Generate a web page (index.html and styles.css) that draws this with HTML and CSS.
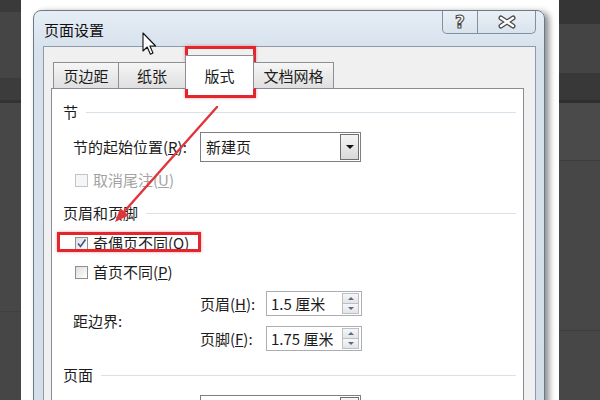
FILE: index.html
```html
<!DOCTYPE html>
<html lang="zh-CN">
<head>
<meta charset="utf-8">
<title>页面设置</title>
<link rel="stylesheet" href="styles.css">
</head>
<body>
<div class="stage">
  <div class="bg-left"></div>
  <div class="desk">
    <div class="dialog">
      <div class="titlebar">
        <span class="title">页面设置</span>
        <div class="caption">
          <div class="cbtn help">?</div>
          <div class="cbtn close">
            <svg width="20" height="14" viewBox="0 0 20 14">
              <path d="M4 3 L16 11 M16 3 L4 11" stroke="#4a4a4a" stroke-width="5" stroke-linecap="round" fill="none"/>
              <path d="M4 3 L16 11 M16 3 L4 11" stroke="#ffffff" stroke-width="2.4" stroke-linecap="round" fill="none"/>
            </svg>
          </div>
        </div>
      </div>
      <div class="client">
        <div class="tabs">
          <div class="tab t1">页边距</div>
          <div class="tab t2">纸张</div>
          <div class="tab t3 active">版式</div>
          <div class="tab t4">文档网格</div>
        </div>
        <div class="panel">
          <div class="sec-head first"><span>节</span><i class="rule"></i></div>
          <div class="row-select">
            <span class="lbl">节的起始位置(<u>R</u>):</span>
            <div class="select"><span>新建页</span><span class="ddbtn"><i class="tri"></i></span></div>
          </div>
          <div class="check-row disabled r1"><span class="cb"></span><span>取消尾注(<u>U</u>)</span></div>
          <div class="sec-head h2"><span>页眉和页脚</span><i class="rule"></i></div>
          <div class="check-row r2"><span class="cb checked"><svg width="11" height="11" viewBox="0 0 11 11"><path d="M2 5.5 L4.5 8.5 L9.5 1.5" stroke="#3f5590" stroke-width="1.6" fill="none"/></svg></span><span>奇偶页不同(<u>O</u>)</span></div>
          <div class="check-row r3"><span class="cb"></span><span>首页不同(<u>P</u>)</span></div>
          <div class="margins">
            <span class="mlbl">距边界:</span>
            <span class="slbl">页眉(<u>H</u>):</span>
            <div class="spin"><span>1.5 厘米</span><span class="spinbtns"><i class="up"><b class="tu"></b></i><i class="dn"><b class="td"></b></i></span></div>
            <span class="slbl">页脚(<u>F</u>):</span>
            <div class="spin"><span>1.75 厘米</span><span class="spinbtns"><i class="up"><b class="tu"></b></i><i class="dn"><b class="td"></b></i></span></div>
          </div>
          <div class="sec-head h3"><span>页面</span><i class="rule"></i></div>
          <div class="row-select last">
            <span class="lbl"></span>
            <div class="select"><span class="ddbtn"><i class="tri"></i></span></div>
          </div>
        </div>
      </div>
    </div>
  </div>
  <div class="bg-right"></div>

  <div class="red red-tab"></div>
  <div class="red red-chk"></div>
  <svg class="annot" width="600" height="400" viewBox="0 0 600 400">
    <line x1="217" y1="107" x2="122" y2="214" stroke="#e0353a" stroke-width="2.4" stroke-linecap="round"/>
    <polygon points="115,222 128.5,215.5 120.2,208" fill="#e0353a"/>
  </svg>
  <svg class="cursor" width="16" height="24" viewBox="0 0 16 24">
    <path d="M1 1 L1 19 L5.2 15 L8.4 22.2 L11 21 L7.9 14 L13.6 14 Z" fill="#ffffff" stroke="#111" stroke-width="1.1" stroke-linejoin="round"/>
  </svg>
</div>
</body>
</html>
```

FILE: styles.css
```css
* { box-sizing: border-box; }

body {
  margin: 0;
  font-family: "Noto Sans CJK SC", "Microsoft YaHei", sans-serif;
  font-size: 15px;
  color: #1c1c1c;
}

.stage {
  position: relative;
  width: 600px;
  height: 400px;
  overflow: hidden;
  display: flex;
}

.bg-left {
  width: 21px;
  flex: none;
  background: linear-gradient(to bottom,
    #3a3a3a 0 12px, #454545 12px 78px, #3c3c3c 78px 100px,
    #333333 100px 103px, #474747 103px 311px, #404040 311px 312px,
    #464646 312px 400px);
}

.bg-right {
  width: 41px;
  flex: none;
  background: linear-gradient(to bottom,
    #353535 0 24px, #444444 24px 73px, #383838 73px 100px,
    #2f2f2f 100px 103px, #4a4a4a 103px 160px, #3d3d3d 160px 161px,
    #474747 161px 330px, #3d3d3d 330px 331px, #474747 331px 400px);
}

.desk {
  width: 538px;
  flex: none;
  background: #ffffff;
  padding: 10px 0 0 12px;
}

.dialog {
  width: 512px;
  height: 410px;
  border: 1px solid #6d7a88;
  border-radius: 8px 8px 0 0;
  background: linear-gradient(to bottom, #e6edf5 0, #d6e1ec 40px, #d3dee9 100%);
  box-shadow: 4px 2px 6px rgba(0, 0, 0, 0.45);
  display: flex;
  flex-direction: column;
}

.titlebar {
  height: 35px;
  flex: none;
  display: flex;
  justify-content: space-between;
  align-items: flex-start;
  padding: 0 8px 0 10px;
}

.title {
  margin-top: 9px;
  line-height: 20px;
  font-size: 15px;
  color: #111;
}

.caption {
  display: flex;
  width: 94px;
  height: 23px;
  border: 1px solid #8290a0;
  border-top: none;
  border-radius: 0 0 5px 5px;
  background: linear-gradient(to bottom, #eaf0f6, #d9e3ed);
}

.cbtn {
  display: flex;
  align-items: center;
  justify-content: center;
}

.help {
  width: 35px;
  border-right: 1px solid #8290a0;
  font-family: "DejaVu Sans", sans-serif;
  font-weight: bold;
  font-size: 17px;
  color: #ffffff;
  -webkit-text-stroke: 1.1px #4a4a4a;
  line-height: 20px;
}

.close { flex: 1; }

.client {
  flex: 1;
  margin: 0 8px 0 9px;
  border: 1px solid #8e9aa8;
  border-bottom: none;
  background: #f0f0f0;
  padding: 8px 11px 0 7px;
  display: flex;
  flex-direction: column;
}

.tabs {
  height: 33px;
  flex: none;
  display: flex;
  align-items: flex-end;
  padding-left: 2px;
  position: relative;
  z-index: 2;
}

.tab {
  height: 26px;
  border: 1px solid #8c8f96;
  border-bottom: none;
  background: linear-gradient(to bottom, #f6f6f6, #dfdfdf);
  display: flex;
  align-items: center;
  justify-content: center;
  line-height: 20px;
  margin-left: -1px;
}

.t1 { width: 66px; margin-left: 0; }
.t2 { width: 68px; }
.t3 { width: 69px; }
.t4 { width: 81px; }

.tab.active {
  height: 34px;
  margin-bottom: -1px;
  background: #ffffff;
  padding-top: 6px;
}

.panel {
  flex: 1;
  border: 1px solid #898c95;
  background: #ffffff;
  padding: 0 7px 0 11px;
}

.sec-head {
  display: flex;
  align-items: center;
  height: 20px;
  line-height: 20px;
}

.sec-head.first { margin-top: 13px; }
.sec-head.h2 { margin-top: 13px; }
.sec-head.h3 { margin-top: 14px; }

.rule {
  flex: 1;
  height: 1px;
  background: #d9e2ea;
  margin-left: 8px;
}

.row-select {
  display: flex;
  align-items: center;
  height: 30px;
  margin-top: 10px;
  padding-left: 10px;
  line-height: 20px;
}

.lbl { width: 127px; flex: none; }

.select {
  width: 161px;
  height: 30px;
  border: 1px solid #7d7f84;
  display: flex;
  align-items: center;
  padding-left: 5px;
  background: #fff;
}

.ddbtn {
  margin-left: auto;
  margin-right: 1px;
  width: 19px;
  height: 26px;
  border: 1px solid #707070;
  background: linear-gradient(to bottom, #f5f5f5, #d9d9d9);
  display: flex;
  align-items: center;
  justify-content: center;
}

.tri {
  width: 0;
  height: 0;
  border-left: 4px solid transparent;
  border-right: 4px solid transparent;
  border-top: 4px solid #111;
}

.check-row {
  display: flex;
  align-items: center;
  height: 20px;
  line-height: 20px;
  padding-left: 12px;
}

.check-row.r1 { margin-top: 8px; }
.check-row.r2 { margin-top: 10px; }
.check-row.r3 { margin-top: 9px; }

.cb {
  width: 13px;
  height: 13px;
  flex: none;
  border: 1px solid #8e8f8f;
  background: linear-gradient(135deg, #dedede, #ffffff);
  margin-right: 5px;
  display: flex;
  align-items: center;
  justify-content: center;
}

.disabled { color: #a3a3a3; }
.disabled .cb {
  border-color: #c4c4c4;
  background: #f6f6f6;
}

.margins {
  display: grid;
  grid-template-columns: 127px 66px 96px;
  grid-template-rows: 25px 25px;
  row-gap: 10px;
  align-items: center;
  margin-top: 9px;
  padding-left: 10px;
  line-height: 20px;
}

.mlbl { grid-column: 1; grid-row: 1 / 3; }
.slbl { grid-column: 2; }

.spin {
  grid-column: 3;
  height: 25px;
  border: 1px solid #abadb3;
  display: flex;
  align-items: center;
  padding-left: 4px;
}

.spinbtns {
  margin-left: auto;
  margin-right: 2px;
  width: 17px;
  height: 21px;
  display: flex;
  flex-direction: column;
}

.spinbtns i {
  flex: 1;
  border: 1px solid #bcc0c6;
  background: linear-gradient(to bottom, #f7f7f7, #e4e4e4);
  display: flex;
  align-items: center;
  justify-content: center;
}

.spinbtns i + i { border-top: none; }

.tu {
  width: 0; height: 0;
  border-left: 3px solid transparent;
  border-right: 3px solid transparent;
  border-bottom: 3px solid #56698f;
}

.td {
  width: 0; height: 0;
  border-left: 3px solid transparent;
  border-right: 3px solid transparent;
  border-top: 3px solid #56698f;
}

.red {
  position: absolute;
  border: 3px solid #e1262d;
  box-shadow: 0 0 3px rgba(225, 38, 45, 0.45);
}

.red-tab { left: 185px; top: 46px; width: 71px; height: 52px; }
.red-chk { left: 57px; top: 232px; width: 144px; height: 20px; }

.annot {
  position: absolute;
  left: 0;
  top: 0;
  pointer-events: none;
}

.cursor {
  position: absolute;
  left: 142px;
  top: 32px;
}
```
